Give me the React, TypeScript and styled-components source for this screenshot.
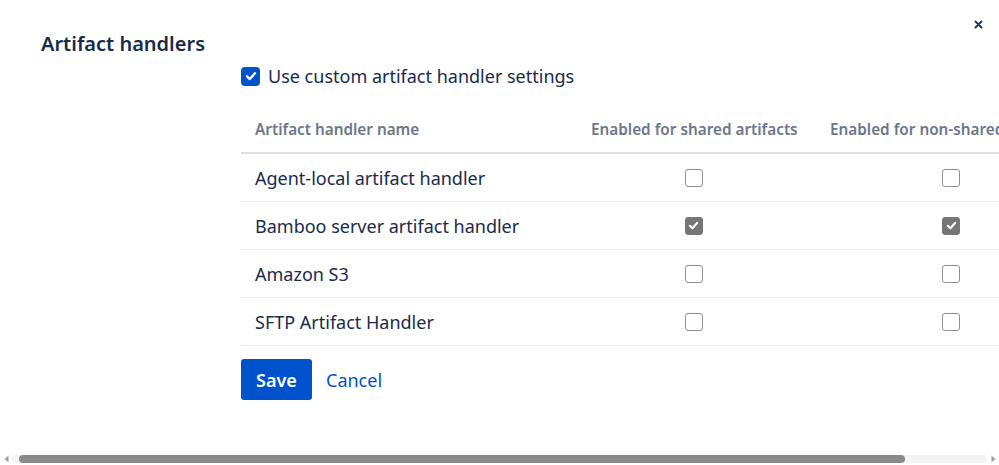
import React from "react";
import styled, { createGlobalStyle } from "styled-components";

const GlobalStyle = createGlobalStyle`
  html, body {
    margin: 0;
    padding: 0;
    background: #ffffff;
    overflow: hidden;
  }
  body {
    font-family: "Noto Sans", "Open Sans", sans-serif;
    color: #172b4d;
  }
`;

const Page = styled.div`
  position: relative;
  width: 999px;
  height: 465px;
  display: flex;
  flex-direction: column;
`;

const Viewport = styled.div`
  flex: 1;
  overflow: hidden;
`;

const Content = styled.div`
  width: 1104px;
  padding: 29px 0 0 41px;
  box-sizing: border-box;
`;

const CloseButton = styled.button`
  position: absolute;
  top: 14px;
  right: 11px;
  width: 20px;
  height: 20px;
  padding: 0;
  border: 0;
  background: transparent;
  display: flex;
  align-items: center;
  justify-content: center;
  cursor: pointer;
`;

const Title = styled.h2`
  margin: 0;
  font-size: 20px;
  line-height: 30px;
  font-weight: 600;
  color: #172b4d;
`;

const Form = styled.div`
  margin-left: 200px;
`;

const OptionRow = styled.label`
  display: flex;
  align-items: center;
  gap: 8px;
  height: 24px;
  margin-top: 5px;
  font-size: 18px;
  color: #172b4d;
`;

const BlueCheck = styled.span`
  width: 19px;
  height: 19px;
  border-radius: 4px;
  background: #0052cc;
  display: flex;
  align-items: center;
  justify-content: center;
`;

const Table = styled.table`
  border-collapse: collapse;
  margin-top: 18px;
  table-layout: fixed;
`;

const HeadCell = styled.th`
  height: 46px;
  padding: 0 14px;
  text-align: left;
  font-size: 15.3px;
  font-weight: 600;
  color: #6b778c;
  white-space: nowrap;
  border-bottom: 2px solid #dfe1e6;
`;

const Cell = styled.td`
  height: 47px;
  padding: 0 14px;
  font-size: 18px;
  color: #172b4d;
  border-bottom: 1px solid #ebecf0;
  white-space: nowrap;
`;

const CheckWrap = styled.div`
  display: flex;
  align-items: center;
  justify-content: center;
  padding-right: 6px;
`;

const GreyBox = styled.span<{ $checked: boolean }>`
  display: flex;
  align-items: center;
  justify-content: center;
  box-sizing: border-box;
  width: 18px;
  height: 18px;
  border-radius: 3px;
  border: 1.5px solid ${(p) => (p.$checked ? "#767676" : "#8f8f8f")};
  background: ${(p) => (p.$checked ? "#767676" : "#ffffff")};
`;

const Actions = styled.div`
  display: flex;
  align-items: center;
  gap: 14px;
  margin-top: 13px;
`;

const SaveButton = styled.button`
  width: 71px;
  height: 41px;
  border: 0;
  border-radius: 3px;
  background: #0052cc;
  color: #ffffff;
  font-family: inherit;
  font-size: 18px;
  font-weight: 600;
  cursor: pointer;
`;

const CancelLink = styled.a`
  color: #0052cc;
  font-size: 18px;
  text-decoration: none;
  cursor: pointer;
`;

const ScrollBar = styled.div`
  height: 10px;
  display: flex;
  align-items: center;
  margin-bottom: 1px;
`;

const Arrow = styled.span`
  width: 12px;
  display: flex;
  align-items: center;
  justify-content: center;
`;

const Track = styled.div`
  flex: 1;
  height: 8px;
  background: #f4f4f4;
  border-radius: 4px;
  display: flex;
  padding-left: 7px;
`;

const Thumb = styled.div`
  height: 8px;
  border-radius: 4px;
  background: #8a8a8a;
`;

const Tick = ({ size }: { size: number }) => (
  <svg width={size} height={size} viewBox="0 0 12 12">
    <path
      d="M2.6 6.3 L5 8.6 L9.4 3.6"
      fill="none"
      stroke="#ffffff"
      strokeWidth="2"
      strokeLinecap="round"
      strokeLinejoin="round"
    />
  </svg>
);

type Handler = {
  name: string;
  shared: boolean;
  nonShared: boolean;
};

const handlers: Handler[] = [
  { name: "Agent-local artifact handler", shared: false, nonShared: false },
  { name: "Bamboo server artifact handler", shared: true, nonShared: true },
  { name: "Amazon S3", shared: false, nonShared: false },
  { name: "SFTP Artifact Handler", shared: false, nonShared: false },
];

const CheckCell = ({ checked }: { checked: boolean }) => (
  <Cell>
    <CheckWrap>
      <GreyBox $checked={checked}>{checked && <Tick size={13} />}</GreyBox>
    </CheckWrap>
  </Cell>
);

const App: React.FC = () => {
  return (
    <Page>
      <GlobalStyle />
      <CloseButton aria-label="Close">
        <svg width="9" height="9" viewBox="0 0 9 9">
          <path
            d="M1.5 1.5 L7.5 7.5 M7.5 1.5 L1.5 7.5"
            stroke="#253858"
            strokeWidth="2"
            strokeLinecap="round"
          />
        </svg>
      </CloseButton>
      <Viewport>
        <Content>
          <Title>Artifact handlers</Title>
          <Form>
            <OptionRow>
              <BlueCheck>
                <Tick size={14} />
              </BlueCheck>
              Use custom artifact handler settings
            </OptionRow>
            <Table>
              <colgroup>
                <col style={{ width: 336 }} />
                <col style={{ width: 239 }} />
                <col style={{ width: 276 }} />
              </colgroup>
              <thead>
                <tr>
                  <HeadCell>Artifact handler name</HeadCell>
                  <HeadCell>Enabled for shared artifacts</HeadCell>
                  <HeadCell>Enabled for non-shared artifacts</HeadCell>
                </tr>
              </thead>
              <tbody>
                {handlers.map((h) => (
                  <tr key={h.name}>
                    <Cell>{h.name}</Cell>
                    <CheckCell checked={h.shared} />
                    <CheckCell checked={h.nonShared} />
                  </tr>
                ))}
              </tbody>
            </Table>
            <Actions>
              <SaveButton>Save</SaveButton>
              <CancelLink>Cancel</CancelLink>
            </Actions>
          </Form>
        </Content>
      </Viewport>
      <ScrollBar>
        <Arrow>
          <svg width="5" height="8" viewBox="0 0 5 8">
            <path d="M4.5 0.5 L0.5 4 L4.5 7.5 Z" fill="#a0a0a0" />
          </svg>
        </Arrow>
        <Track>
          <Thumb style={{ width: 886 }} />
        </Track>
        <Arrow>
          <svg width="5" height="8" viewBox="0 0 5 8">
            <path d="M0.5 0.5 L4.5 4 L0.5 7.5 Z" fill="#a0a0a0" />
          </svg>
        </Arrow>
      </ScrollBar>
    </Page>
  );
};

export default App;
